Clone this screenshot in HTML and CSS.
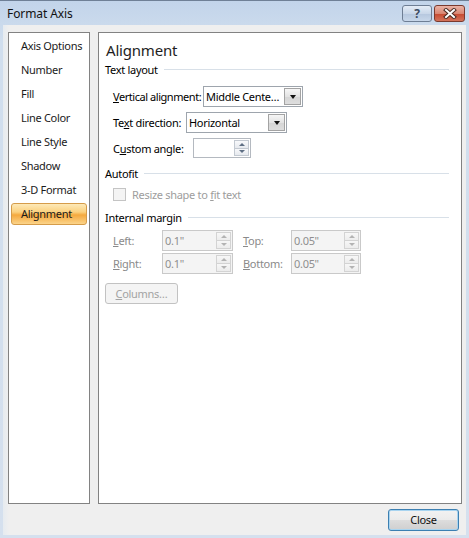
FILE: index.html
```html
<!DOCTYPE html>
<html>
<head>
<meta charset="utf-8">
<link rel="stylesheet" href="styles.css">
</head>
<body>
<div class="window">
  <div class="titlebar">
    <span class="title">Format Axis</span>
    <div class="caption-btns">
      <div class="cbtn help">?</div>
      <div class="cbtn close">
        <svg width="14" height="11" viewBox="0 0 14 11"><path d="M3 2 L11 9 M11 2 L3 9" stroke="#4a2a22" stroke-width="4" stroke-linecap="square"/><path d="M3 2 L11 9 M11 2 L3 9" stroke="#fff" stroke-width="2" stroke-linecap="square"/></svg>
      </div>
    </div>
  </div>
  <div class="client">
    <div class="main">
      <ul class="nav">
        <li class="nav-item">Axis Options</li>
        <li class="nav-item">Number</li>
        <li class="nav-item">Fill</li>
        <li class="nav-item">Line Color</li>
        <li class="nav-item">Line Style</li>
        <li class="nav-item">Shadow</li>
        <li class="nav-item">3-D Format</li>
        <li class="nav-item selected">Alignment</li>
      </ul>
      <div class="panel">
        <h1 class="heading">Alignment</h1>
        <div class="sec">Text layout</div>
        <div class="row row-va">
          <span class="lbl lbl-va"><u>V</u>ertical alignment:</span>
          <div class="combo combo-va"><span class="val">Middle Cente…</span><span class="drop"><i class="tri"></i></span></div>
        </div>
        <div class="row row-td">
          <span class="lbl lbl-td">Te<u>x</u>t direction:</span>
          <div class="combo combo-td"><span class="val">Horizontal</span><span class="drop"><i class="tri"></i></span></div>
        </div>
        <div class="row row-ca">
          <span class="lbl lbl-ca">C<u>u</u>stom angle:</span>
          <div class="spinbox spin-ca"><span class="val"></span><span class="spin"><span class="up"><i class="tup"></i></span><span class="dn"><i class="tdn"></i></span></span></div>
        </div>
        <div class="sec sec-autofit">Autofit</div>
        <div class="row row-chk">
          <span class="chk"></span>
          <span class="chk-lbl">Resize shape to <u>f</u>it text</span>
        </div>
        <div class="sec sec-im">Internal margin</div>
        <div class="margins">
          <span class="mlbl"><u>L</u>eft:</span>
          <div class="spinbox disabled"><span class="val">0.1"</span><span class="spin"><span class="up"><i class="tup"></i></span><span class="dn"><i class="tdn"></i></span></span></div>
          <span class="mlbl mlbl2"><u>T</u>op:</span>
          <div class="spinbox disabled"><span class="val">0.05"</span><span class="spin"><span class="up"><i class="tup"></i></span><span class="dn"><i class="tdn"></i></span></span></div>
          <span class="mlbl"><u>R</u>ight:</span>
          <div class="spinbox disabled"><span class="val">0.1"</span><span class="spin"><span class="up"><i class="tup"></i></span><span class="dn"><i class="tdn"></i></span></span></div>
          <span class="mlbl mlbl2"><u>B</u>ottom:</span>
          <div class="spinbox disabled"><span class="val">0.05"</span><span class="spin"><span class="up"><i class="tup"></i></span><span class="dn"><i class="tdn"></i></span></span></div>
        </div>
        <div class="btn-columns"><u>C</u>olumns…</div>
      </div>
    </div>
    <div class="footer">
      <div class="btn-close">Close</div>
    </div>
  </div>
</div>
</body>
</html>
```
FILE: styles.css
```css
* { box-sizing: border-box; }
body {
  margin: 0;
  font-family: "Noto Sans", "Open Sans", sans-serif;
  font-size: 11px;
  letter-spacing: -0.3px;
  color: #000;
}
.window {
  width: 469px;
  height: 538px;
  background: linear-gradient(#c2d4ea, #d0deee 40px, #d5e0ee);
  display: flex;
  flex-direction: column;
  border-top: 1px solid #6f8096;
}
.titlebar {
  height: 24px;
  display: flex;
  align-items: flex-start;
  justify-content: space-between;
}
.title {
  padding-left: 7px;
  padding-top: 1px;
  line-height: 24px;
  font-size: 12px;
  letter-spacing: -0.1px;
  color: #111;
}
.caption-btns {
  display: flex;
  gap: 2px;
  margin-top: 4px;
  margin-right: 4px;
}
.cbtn {
  width: 30px;
  height: 17px;
  border: 1px solid #6e7e94;
  border-radius: 3px;
  display: flex;
  align-items: center;
  justify-content: center;
}
.help {
  background: linear-gradient(#e4ecf6, #c9d7e9 50%, #b5c7de 51%, #c8d7ea);
  color: #3c4c62;
  font-size: 12px;
  font-weight: bold;
  line-height: 14px;
}
.close {
  width: 31px;
  background: linear-gradient(#eab3a6, #d98672 50%, #c6482f 51%, #d3735b);
  border-color: #7a3a2e;
}
.client {
  flex: 1;
  margin: 0 3px 3px;
  background: linear-gradient(90deg, #e6ebf0, #efefef 6px);
  background-color: #efefef;
  padding: 7px 4px 0 5px;
  display: flex;
  flex-direction: column;
}
.main {
  display: flex;
  gap: 8px;
  height: 472px;
}
.nav {
  width: 82px;
  margin: 0;
  padding: 2px 2px 0;
  list-style: none;
  background: #fff;
  border: 1px solid #828282;
}
.nav-item {
  height: 22px;
  line-height: 22px;
  margin-bottom: 2px;
  padding-left: 10px;
  color: #1b1b1b;
  white-space: nowrap;
}
.nav-item.selected {
  background: linear-gradient(#fde9b8, #fbd17f 40%, #f5a93e 55%, #fbd48a);
  border: 1px solid #d59c4a;
  border-radius: 3px;
  line-height: 20px;
  padding-left: 9px;
}
.panel {
  flex: 1;
  background: #fff;
  border: 1px solid #828282;
  padding: 6px 6px 0 6px;
  display: flex;
  flex-direction: column;
  align-items: flex-start;
}
.heading {
  margin: 0 0 0 1px;
  font-size: 15px;
  font-weight: normal;
  letter-spacing: -0.2px;
  line-height: 22px;
  color: #1e1e1e;
}
.sec {
  align-self: stretch;
  display: flex;
  align-items: center;
  height: 16px;
  margin-right: 6px;
  white-space: nowrap;
}
.sec::after {
  content: "";
  flex: 1;
  height: 1px;
  background: #d8e0e8;
  margin-left: 6px;
}
.row {
  display: flex;
  align-items: center;
  padding-left: 8px;
  white-space: nowrap;
}
.lbl { flex-shrink: 0; }
.row-va { margin-top: 9px; height: 21px; }
.row-td { margin-top: 5px; height: 21px; }
.row-ca { margin-top: 5px; height: 20px; }
.lbl-va { width: 90px; letter-spacing: -0.45px; }
.lbl-td { width: 73px; }
.lbl-ca { width: 80px; }
.combo {
  height: 21px;
  width: 100px;
  flex-shrink: 0;
  display: flex;
  border: 1px solid #9ea5ad;
  background: #fff;
}
.combo-td { width: 101px; }
.combo .val {
  flex: 1;
  padding-left: 2px;
  line-height: 19px;
  overflow: hidden;
}
.drop {
  width: 17px;
  margin: 1px;
  border: 1px solid #a3a3a3;
  background: linear-gradient(#f6f6f6, #e3e3e3 50%, #d5d5d5 51%, #dedede);
  display: flex;
  align-items: center;
  justify-content: center;
}
.tri {
  width: 0;
  height: 0;
  border-left: 3.5px solid transparent;
  border-right: 3.5px solid transparent;
  border-top: 4px solid #111;
}
.spinbox {
  height: 20px;
  width: 58px;
  flex-shrink: 0;
  display: flex;
  border: 1px solid #b4b9c0;
  background: #fff;
}
.spinbox .val {
  flex: 1;
  padding-left: 2px;
  line-height: 18px;
}
.spin {
  width: 15px;
  display: flex;
  flex-direction: column;
  margin: 1px 1px 1px 0;
}
.spin .up, .spin .dn {
  flex: 1;
  border: 1px solid #c3c9d1;
  background: linear-gradient(#f8f9fb, #e6e9ee);
  display: flex;
  align-items: center;
  justify-content: center;
}
.spin .dn { border-top: none; }
.tup {
  width: 0; height: 0;
  border-left: 3px solid transparent;
  border-right: 3px solid transparent;
  border-bottom: 3px solid #5f6f84;
}
.tdn {
  width: 0; height: 0;
  border-left: 3px solid transparent;
  border-right: 3px solid transparent;
  border-top: 3px solid #5f6f84;
}
.sec-autofit { margin-top: 7px; }
.row-chk { margin-top: 6px; height: 14px; }
.chk {
  width: 13px;
  height: 13px;
  border: 1px solid #c4c4c4;
  background: #f4f4f4;
  margin-right: 6px;
}
.chk-lbl { color: #9d9d9d; }
.sec-im { margin-top: 8px; }
.margins {
  display: grid;
  grid-template-columns: 49px 71px 58px 70px;
  grid-auto-rows: 21px;
  row-gap: 2px;
  padding-left: 8px;
  margin-top: 5px;
  align-items: center;
  white-space: nowrap;
}
.mlbl { color: #8a8a8a; }
.mlbl2 { padding-left: 10px; }
.spinbox.disabled {
  width: auto;
  height: 21px;
  border-color: #c9c9c9;
  background: #f4f4f4;
  color: #8f8f8f;
}
.spinbox.disabled .val { line-height: 19px; }
.spinbox.disabled .spin .up, .spinbox.disabled .spin .dn {
  border-color: #d3d3d3;
  background: linear-gradient(#f7f7f7, #ececec);
}
.spinbox.disabled .tup { border-bottom-color: #b3b3b3; }
.spinbox.disabled .tdn { border-top-color: #b3b3b3; }
.btn-columns {
  margin-top: 9px;
  width: 73px;
  height: 21px;
  border: 1px solid #c2c2c2;
  border-radius: 3px;
  background: #f4f4f4;
  color: #a3a3a3;
  text-align: center;
  line-height: 19px;
}
.footer {
  display: flex;
  justify-content: flex-end;
  margin-top: 5px;
}
.btn-close {
  width: 71px;
  height: 22px;
  margin-right: 3px;
  border: 1px solid #3c7fb1;
  border-radius: 3px;
  background: linear-gradient(#f2f2f2, #ebebeb 48%, #dddddd 50%, #cfcfcf);
  box-shadow: inset 0 0 0 1px #a8d4f0;
  text-align: center;
  line-height: 20px;
  color: #111;
}
```
